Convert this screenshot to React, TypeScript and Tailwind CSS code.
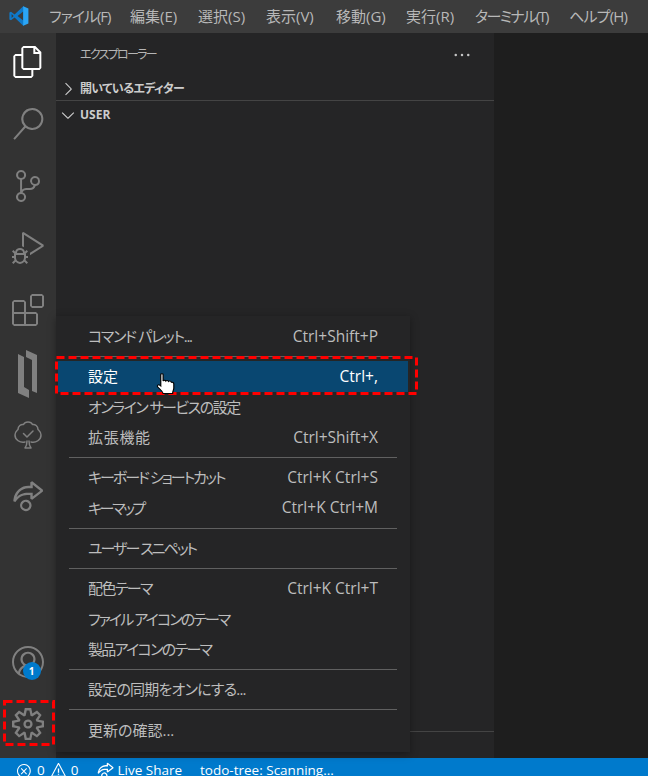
import React from "react";
import {
  VscFiles,
  VscSearch,
  VscSourceControl,
  VscDebugAlt,
  VscExtensions,
  VscLiveShare,
  VscAccount,
  VscSettingsGear,
  VscEllipsis,
  VscChevronRight,
  VscChevronDown,
  VscError,
  VscWarning,
} from "react-icons/vsc";

const font = "font-['Open_Sans','Noto_Sans_CJK_JP',sans-serif] [font-feature-settings:'palt']";

const menus = [
  { label: "ファイル(F)", w: "w-[61px] tracking-[-1px]" },
  { label: "編集(E)", w: "w-[48px]" },
  { label: "選択(S)", w: "w-[48px]" },
  { label: "表示(V)", w: "w-[50px]" },
  { label: "移動(G)", w: "w-[50px]" },
  { label: "実行(R)", w: "w-[49px]" },
  { label: "ターミナル(T)", w: "w-[74px] tracking-[-1.6px]" },
  { label: "ヘルプ(H)", w: "w-[57px] tracking-[-0.8px]" },
];

type Item = { label?: string; keys?: string; active?: boolean; sep?: boolean; track?: string };

const items: Item[] = [
  { label: "コマンド パレット...", keys: "Ctrl+Shift+P", track: "tracking-[-1.3px]" },
  { sep: true },
  { label: "設定", keys: "Ctrl+,", active: true },
  { label: "オンライン サービスの設定", track: "tracking-[-1.5px]" },
  { label: "拡張機能", keys: "Ctrl+Shift+X", track: "tracking-[0.7px]" },
  { sep: true },
  { label: "キーボード ショートカット", keys: "Ctrl+K Ctrl+S", track: "tracking-[-2px]" },
  { label: "キーマップ", keys: "Ctrl+K Ctrl+M", track: "tracking-[-2.4px]" },
  { sep: true },
  { label: "ユーザー スニペット", keys: undefined, track: "tracking-[-2px]" },
  { sep: true },
  { label: "配色テーマ", keys: "Ctrl+K Ctrl+T", track: "tracking-[-1.6px]" },
  { label: "ファイル アイコンのテーマ", track: "tracking-[-1.9px]" },
  { label: "製品アイコンのテーマ", track: "tracking-[-1.7px]" },
  { sep: true },
  { label: "設定の同期をオンにする...", track: "tracking-[-0.8px]" },
  { sep: true },
  { label: "更新の確認..." },
];

const VsLogo = () => (
  <svg width="20" height="20" viewBox="0 0 100 100">
    <path d="M71 1 L28 43 L10 29 L2 33 V67 L10 71 L28 57 L71 99 L76 96 V4 Z M71 28 L43 50 L71 72 Z M13 40 L23 50 L13 60 Z" fill="#0f79c9" fillRule="evenodd" />
    <path d="M71 1 L97 13 V87 L71 99 V1 Z" fill="#2ba5f5" />
  </svg>
);

const TallIcon = () => (
  <svg width="22" height="50" viewBox="0 0 22 50" fill="#808080">
    <path d="M1 5 L7 8 V38 L12 41 V49 L1 44 Z" />
    <path d="M9 1 L20 6 V44 L15 42 V11 L9 8 Z" />
  </svg>
);

const TreeIcon = () => (
  <svg width="28" height="30" viewBox="0 0 28 30" fill="none" stroke="#808080" strokeWidth="1.5" strokeLinejoin="round" strokeLinecap="round">
    <path d="M11 22 C6 23 1 20 1 15 C1 12 2.5 11 4 9.5 C4 6 7 4 9.5 4.5 C11 1 17 1 18.5 4.5 C21 4 24 6 24 9.5 C25.5 11 27 12 27 15 C27 20 22 23 17 22" />
    <path d="M13 21 C13 24 12.5 26 11 28 H17 C15.5 26 15 24 15 21" />
    <path d="M9.5 13.5 L13 17 L19 11" />
  </svg>
);

const HandCursor = () => (
  <svg width="19" height="22" viewBox="0 0 16 22" preserveAspectRatio="none" className="absolute left-[156px] top-[373px]">
    <path
      d="M4 1.5 C4 0.5 6 0.5 6 1.5 V8 C6.5 7 8 7 8.3 8 C8.8 7.2 10.2 7.2 10.5 8.4 C11 7.8 12.8 8 13 9.3 C14 9 15 9.5 15 11 V15 C15 17 14 18 14 20.5 H6 C5.5 18 3 16 1.5 14 C0.5 12.5 2 11 3.5 12.5 L4 13 Z"
      fill="#fff"
      stroke="#000"
      strokeWidth="1"
    />
  </svg>
);

const App = () => {
  return (
    <div className={`relative flex h-[776px] w-[648px] flex-col overflow-hidden bg-[#1e1e1e] ${font}`}>
      {/* title bar */}
      <div className="flex h-[33px] shrink-0 items-center gap-[20px] bg-[#3c3c3c] pl-[9px] text-[15px] text-[#b8b8b8]">
        <div className="flex w-[20px] shrink-0 -translate-y-[1px] items-center">
          <VsLogo />
        </div>
        {menus.map((m) => (
          <span key={m.label} className={`${m.w} shrink-0 whitespace-nowrap`}>
            {m.label}
          </span>
        ))}
      </div>

      <div className="flex min-h-0 flex-1">
        {/* activity bar */}
        <div className="flex w-[56px] shrink-0 flex-col items-center bg-[#333333] pr-[1px] text-[#808080]">
          <VscFiles className="mt-[13px] text-white" size={32} />
          <VscSearch className="mt-[30px]" size={32} />
          <VscSourceControl className="mt-[30px]" size={32} />
          <VscDebugAlt className="mt-[30px]" size={32} />
          <VscExtensions className="mt-[30px]" size={32} />
          <div className="mt-[23px]">
            <TallIcon />
          </div>
          <div className="mt-[21px]">
            <TreeIcon />
          </div>
          <VscLiveShare className="mt-[30px]" size={32} />
          <div className="relative mt-auto">
            <VscAccount size={32} />
            <span className="absolute left-[11px] top-[16px] flex h-[18px] w-[18px] items-center justify-center rounded-full bg-[#007acc] text-[10px] font-bold text-white">
              1
            </span>
          </div>
          <VscSettingsGear className="mb-[18px] mt-[30px]" size={32} />
        </div>

        {/* explorer */}
        <div className="flex w-[438px] shrink-0 flex-col bg-[#252526] text-[#cccccc]">
          <div className="flex h-[44px] shrink-0 items-center justify-between pl-[24px] pr-[22px]">
            <span className="text-[12px] tracking-[-1.7px] text-[#b5b5b5]">エクスプローラー</span>
            <VscEllipsis size={20} className="text-[#c5c5c5]" />
          </div>
          <div className="flex h-[24px] shrink-0 items-center border-b border-[#444444] pl-[2px] text-[12px] font-bold tracking-[-0.7px]">
            <VscChevronRight size={20} className="mr-[2px]" />
            開いているエディター
          </div>
          <div className="flex h-[27px] shrink-0 items-center pl-[2px] text-[12px] font-bold">
            <VscChevronDown size={20} className="mr-[2px]" />
            USER
          </div>
          <div className="mt-auto h-[27px] shrink-0 border-t border-[#444444]" />
        </div>
      </div>

      {/* status bar */}
      <div className="flex h-[18px] shrink-0 items-start overflow-hidden bg-[#007acc] pl-[16px] pt-[3px] text-[13.5px] leading-[18px] text-white">
        <VscError size={16} className="mt-[2px]" />
        <span className="ml-[5px]">0</span>
        <VscWarning size={17} className="ml-[5px] mt-[1px]" />
        <span className="ml-[4px]">0</span>
        <VscLiveShare size={17} className="ml-[19px] mt-[1px]" />
        <span className="ml-[3px]">Live Share</span>
        <span className="ml-[18px]">todo-tree: Scanning...</span>
      </div>

      {/* manage menu */}
      <div className="absolute left-[56px] top-[316px] w-[354px] bg-[#252526] pb-[7px] pt-[5px] text-[15px] text-[#bdbdbd] shadow-[0_2px_8px_rgba(0,0,0,0.36)]">
        {items.map((it, i) =>
          it.sep ? (
            <div key={i} className="flex h-[10px] items-center px-[13px]">
              <div className="h-px w-full bg-[#606060]" />
            </div>
          ) : (
            <div
              key={i}
              className={`mx-[2px] flex h-[30.35px] items-center justify-between pl-[30px] pr-[30px] ${it.active ? "bg-[#094771] text-white" : ""}`}
            >
              <span className={it.track}>{it.label}</span>
              {it.keys && <span className="text-[15.5px]">{it.keys}</span>}
            </div>
          )
        )}
      </div>

      {/* red callouts */}
      <svg width="363" height="39" className="absolute left-[55px] top-[356px]" fill="none" stroke="#ff0000" strokeWidth="3" strokeDasharray="8 4">
        <rect x="1.5" y="1.5" width="360" height="36" />
      </svg>
      <svg width="52" height="46" className="absolute left-[3px] top-[700px]" fill="none" stroke="#ff0000" strokeWidth="3" strokeDasharray="8 4">
        <rect x="1.5" y="1.5" width="49" height="43" />
      </svg>
      <HandCursor />
    </div>
  );
};

export default App;
